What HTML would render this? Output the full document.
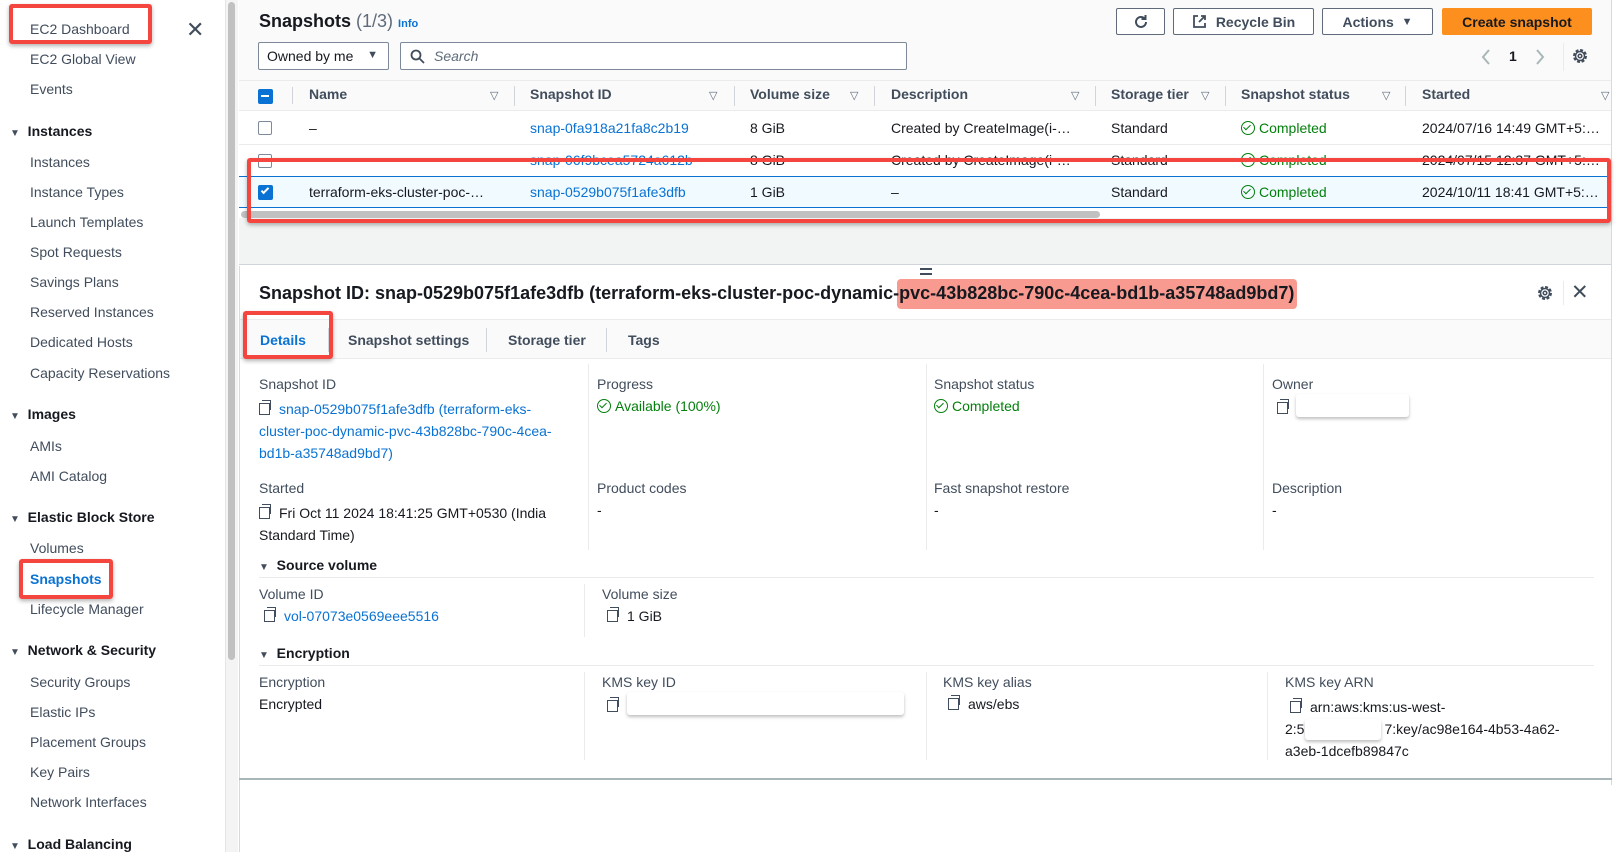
<!DOCTYPE html>
<html><head><meta charset="utf-8">
<style>
*{box-sizing:border-box;margin:0;padding:0}
body{width:1616px;height:852px;overflow:hidden;background:#fff;font-family:"Liberation Sans",sans-serif;font-size:14px;color:#16191f;position:relative}
.a{position:absolute;white-space:nowrap}
.nav{color:#414d5c;font-size:14px}
.hd{font-weight:bold;color:#16191f;font-size:14px}
.tri{font-size:10px;color:#414d5c}
.rb{position:absolute;border:4px solid #f4453e;border-radius:3px;box-shadow:0 2px 4px rgba(0,0,0,.3)}
.btn{position:absolute;border:1px solid #5f6b7a;border-radius:2px;background:#fff;font-weight:bold;color:#414d5c;font-size:14px;display:flex;align-items:center;justify-content:center}
.th{position:absolute;top:86px;font-weight:bold;color:#414d5c;font-size:14px}
.sep{position:absolute;width:1px;background:#d1d5db}
.fi{position:absolute;font-size:11px;color:#5f6b7a}
.lnk{color:#0972d3}
.grn{color:#037f0c}
.lab{color:#414d5c}
.cp{display:inline-block;width:11px;height:12px;border:1.5px solid #414d5c;position:relative;margin-right:9px;vertical-align:-1px}
.cp:after{content:"";position:absolute;left:2px;top:-4px;width:8px;height:9px;border-top:1.5px solid #414d5c;border-right:1.5px solid #414d5c}
.ck{display:inline-block;width:14px;height:14px;border:1.5px solid #037f0c;border-radius:50%;position:relative;vertical-align:-2px;margin-right:4px}
.ck:after{content:"";position:absolute;left:3px;top:1px;width:3px;height:6px;border-right:1.5px solid #037f0c;border-bottom:1.5px solid #037f0c;transform:rotate(45deg)}
.cb{position:absolute;width:14px;height:14px;border:1.5px solid #7d8998;border-radius:2px;background:#fff}
.wb{position:absolute;background:#fff;border-radius:3px;box-shadow:0 2px 3px rgba(0,0,0,.25)}
.vs{position:absolute;width:1px;background:#e9ebed}
</style></head><body>

<div class="a" style="left:0;top:0;width:225px;height:852px;background:#fff"></div>
<div class="a" style="left:225px;top:0;width:13px;height:852px;background:#f4f4f4;border-left:1px solid #e5e5e5"></div>
<div class="a" style="left:228px;top:2px;width:7px;height:658px;background:#c1c1c1;border-radius:4px"></div>

<div class="a nav" style="left:30px;top:21px">EC2 Dashboard</div>
<div class="rb" style="left:9px;top:4px;width:143px;height:40px"></div>
<div class="a" style="left:186px;top:17px;font-size:22px;color:#414d5c;font-weight:300">✕</div>
<div class="a nav" style="left:30px;top:51px">EC2 Global View</div>
<div class="a nav" style="left:30px;top:81px">Events</div>
<div class="a hd" style="left:10px;top:123px"><span class="tri">▼</span>&nbsp; Instances</div>
<div class="a nav" style="left:30px;top:154px">Instances</div>
<div class="a nav" style="left:30px;top:184px">Instance Types</div>
<div class="a nav" style="left:30px;top:214px">Launch Templates</div>
<div class="a nav" style="left:30px;top:244px">Spot Requests</div>
<div class="a nav" style="left:30px;top:274px">Savings Plans</div>
<div class="a nav" style="left:30px;top:304px">Reserved Instances</div>
<div class="a nav" style="left:30px;top:334px">Dedicated Hosts</div>
<div class="a nav" style="left:30px;top:365px">Capacity Reservations</div>
<div class="a hd" style="left:10px;top:406px"><span class="tri">▼</span>&nbsp; Images</div>
<div class="a nav" style="left:30px;top:438px">AMIs</div>
<div class="a nav" style="left:30px;top:468px">AMI Catalog</div>
<div class="a hd" style="left:10px;top:509px"><span class="tri">▼</span>&nbsp; Elastic Block Store</div>
<div class="a nav" style="left:30px;top:540px">Volumes</div>
<div class="a" style="left:30px;top:571px;font-weight:bold;color:#0972d3">Snapshots</div>
<div class="rb" style="left:19px;top:559px;width:94px;height:40px"></div>
<div class="a nav" style="left:30px;top:601px">Lifecycle Manager</div>
<div class="a hd" style="left:10px;top:642px"><span class="tri">▼</span>&nbsp; Network &amp; Security</div>
<div class="a nav" style="left:30px;top:674px">Security Groups</div>
<div class="a nav" style="left:30px;top:704px">Elastic IPs</div>
<div class="a nav" style="left:30px;top:734px">Placement Groups</div>
<div class="a nav" style="left:30px;top:764px">Key Pairs</div>
<div class="a nav" style="left:30px;top:794px">Network Interfaces</div>
<div class="a hd" style="left:10px;top:836px"><span class="tri">▼</span>&nbsp; Load Balancing</div>

<div class="a" style="left:239px;top:0;width:1373px;height:80px;background:#fafafa"></div>
<div class="a" style="left:1611px;top:0;width:1px;height:785px;background:#d5dbdb"></div>
<div class="a" style="left:259px;top:11px;font-size:18px;font-weight:bold">Snapshots <span style="font-weight:normal;color:#5f6b7a">(1/3)</span> <span style="font-size:11px;color:#0972d3">Info</span></div>

<div class="btn" style="left:1116px;top:8px;width:49px;height:27px"><svg width="18" height="18" viewBox="0 0 18 18"><path d="M14 9a5 5 0 1 1-1.5-3.6" fill="none" stroke="#414d5c" stroke-width="2"/><path d="M13.5 2v4h-4" fill="none" stroke="#414d5c" stroke-width="2"/></svg></div>
<div class="btn" style="left:1173px;top:8px;width:141px;height:27px"><svg width="15" height="15" viewBox="0 0 15 15" style="margin-right:9px"><path d="M6 2H2v11h11V9M9 2h4v4M13 2L7 8" fill="none" stroke="#414d5c" stroke-width="1.8"/></svg>Recycle Bin</div>
<div class="btn" style="left:1322px;top:8px;width:111px;height:27px">Actions&nbsp;&nbsp;<span style="font-size:11px">▼</span></div>
<div class="btn" style="left:1442px;top:8px;width:150px;height:27px;background:#fd8f1f;border-color:#fd8f1f;color:#16191f">Create snapshot</div>

<div class="a" style="left:258px;top:42px;width:131px;height:28px;border:1px solid #7d8998;border-radius:2px;background:#fff;padding:5px 8px;color:#16191f">Owned by me <span style="position:absolute;right:10px;top:6px;font-size:11px;color:#414d5c">▼</span></div>
<div class="a" style="left:400px;top:42px;width:507px;height:28px;border:1px solid #7d8998;border-radius:2px;background:#fff;padding:5px 0 0 33px;color:#5f6b7a;font-style:italic">Search
<svg style="position:absolute;left:9px;top:6px" width="15" height="15" viewBox="0 0 15 15"><circle cx="6" cy="6" r="4.5" fill="none" stroke="#414d5c" stroke-width="1.8"/><path d="M9.5 9.5L14 14" stroke="#414d5c" stroke-width="1.8"/></svg></div>
<svg class="a" style="left:1480px;top:48px" width="12" height="18" viewBox="0 0 12 18"><path d="M9 2L3 9l6 7" fill="none" stroke="#aab7b8" stroke-width="2"/></svg>
<div class="a" style="left:1509px;top:48px;font-weight:bold">1</div>
<svg class="a" style="left:1534px;top:48px" width="12" height="18" viewBox="0 0 12 18"><path d="M3 2l6 7-6 7" fill="none" stroke="#aab7b8" stroke-width="2"/></svg>
<div class="a" style="left:1563px;top:43px;width:1px;height:28px;background:#e9ebed"></div>
<svg class="a" style="left:1571px;top:47px" width="18" height="18" viewBox="0 0 18 18"><circle cx="9" cy="9" r="6" fill="none" stroke="#414d5c" stroke-width="2" stroke-dasharray="3 1.7"/><circle cx="9" cy="9" r="4.5" fill="none" stroke="#414d5c" stroke-width="1.5"/><circle cx="9" cy="9" r="1.8" fill="none" stroke="#414d5c" stroke-width="1.5"/></svg>

<div class="a" style="left:239px;top:80px;width:1372px;height:31px;background:#fafafa;border-top:1px solid #e9ebed;border-bottom:1px solid #e9ebed"></div>
<div class="a" style="left:258px;top:89px;width:15px;height:15px;background:#0972d3;border-radius:2px"><div style="position:absolute;left:3px;top:6px;width:8px;height:2px;background:#fff"></div></div>
<div class="sep" style="left:292px;top:87px;height:17px"></div>
<div class="th" style="left:309px">Name</div><div class="fi" style="left:490px;top:89px">▽</div>
<div class="sep" style="left:514px;top:86px;height:20px"></div>
<div class="th" style="left:530px">Snapshot ID</div><div class="fi" style="left:709px;top:89px">▽</div>
<div class="sep" style="left:734px;top:86px;height:20px"></div>
<div class="th" style="left:750px">Volume size</div><div class="fi" style="left:850px;top:89px">▽</div>
<div class="sep" style="left:874px;top:86px;height:20px"></div>
<div class="th" style="left:891px">Description</div><div class="fi" style="left:1071px;top:89px">▽</div>
<div class="sep" style="left:1095px;top:86px;height:20px"></div>
<div class="th" style="left:1111px">Storage tier</div><div class="fi" style="left:1201px;top:89px">▽</div>
<div class="sep" style="left:1225px;top:86px;height:20px"></div>
<div class="th" style="left:1241px">Snapshot status</div><div class="fi" style="left:1382px;top:89px">▽</div>
<div class="sep" style="left:1405px;top:86px;height:20px"></div>
<div class="th" style="left:1422px">Started</div><div class="fi" style="left:1601px;top:89px">▽</div>

<div class="a" style="left:239px;top:144px;width:1372px;height:1px;background:#e9ebed"></div>
<div class="cb" style="left:258px;top:121px"></div>
<div class="a" style="left:309px;top:120px">–</div>
<div class="a lnk" style="left:530px;top:120px">snap-0fa918a21fa8c2b19</div>
<div class="a" style="left:750px;top:120px">8 GiB</div>
<div class="a" style="left:891px;top:120px">Created by CreateImage(i-…</div>
<div class="a" style="left:1111px;top:120px">Standard</div>
<div class="a grn" style="left:1241px;top:120px"><span class="ck"></span>Completed</div>
<div class="a" style="left:1422px;top:120px">2024/07/16 14:49 GMT+5:…</div>

<div class="a" style="left:239px;top:145px;width:1372px;height:30px;overflow:hidden">
<div class="cb" style="left:19px;top:9px"></div>
<div class="a lnk" style="left:291px;top:7px">snap-06f9bcea5724a612b</div>
<div class="a" style="left:511px;top:7px">8 GiB</div>
<div class="a" style="left:652px;top:7px">Created by CreateImage(i-…</div>
<div class="a" style="left:872px;top:7px">Standard</div>
<div class="a grn" style="left:1002px;top:7px"><span class="ck"></span>Completed</div>
<div class="a" style="left:1183px;top:7px">2024/07/15 12:37 GMT+5:…</div>
</div>

<div class="a" style="left:239px;top:176px;width:1372px;height:32px;background:#f1faff;border-top:1px solid #0972d3;border-bottom:1px solid #0972d3"></div>
<div class="a" style="left:258px;top:185px;width:15px;height:15px;background:#0972d3;border-radius:2px"><div style="position:absolute;left:5px;top:1px;width:4px;height:8px;border-right:2px solid #fff;border-bottom:2px solid #fff;transform:rotate(45deg)"></div></div>
<div class="a" style="left:309px;top:184px">terraform-eks-cluster-poc-…</div>
<div class="a lnk" style="left:530px;top:184px">snap-0529b075f1afe3dfb</div>
<div class="a" style="left:750px;top:184px">1 GiB</div>
<div class="a" style="left:891px;top:184px">–</div>
<div class="a" style="left:1111px;top:184px">Standard</div>
<div class="a grn" style="left:1241px;top:184px"><span class="ck"></span>Completed</div>
<div class="a" style="left:1422px;top:184px">2024/10/11 18:41 GMT+5:…</div>

<div class="a" style="left:239px;top:208px;width:1372px;height:10px;background:#fff"></div>
<div class="a" style="left:241px;top:211px;width:859px;height:7px;background:#c1c1c1;border-radius:4px"></div>
<div class="a" style="left:239px;top:218px;width:1372px;height:47px;background:#f2f3f3;border-bottom:1px solid #d1d5db"></div>
<div class="rb" style="left:247px;top:158px;width:1364px;height:65px"></div>

<div class="a" style="left:920px;top:268px;width:12px;height:2px;background:#414d5c"></div>
<div class="a" style="left:920px;top:273px;width:12px;height:2px;background:#414d5c"></div>
<div class="a" style="left:897px;top:279px;width:400px;height:30px;background:#f89a8f;border-radius:4px"></div>
<div class="a" style="left:259px;top:283px;font-size:18px;font-weight:bold">Snapshot ID: snap-0529b075f1afe3dfb (terraform-eks-cluster-poc-dynamic-pvc-43b828bc-790c-4cea-bd1b-a35748ad9bd7)</div>
<svg class="a" style="left:1536px;top:284px" width="18" height="18" viewBox="0 0 18 18"><circle cx="9" cy="9" r="6" fill="none" stroke="#414d5c" stroke-width="2" stroke-dasharray="3 1.7"/><circle cx="9" cy="9" r="4.5" fill="none" stroke="#414d5c" stroke-width="1.5"/><circle cx="9" cy="9" r="1.8" fill="none" stroke="#414d5c" stroke-width="1.5"/></svg>
<div class="a" style="left:1563px;top:281px;width:1px;height:24px;background:#e9ebed"></div>
<div class="a" style="left:1571px;top:280px;font-size:21px;color:#414d5c">✕</div>

<div class="a" style="left:239px;top:319px;width:1372px;height:40px;background:#fafafa;border-top:1px solid #e9ebed;border-bottom:1px solid #e9ebed"></div>
<div class="a" style="left:260px;top:332px;font-weight:bold;color:#0972d3">Details</div>
<div class="a" style="left:328px;top:328px;width:1px;height:24px;background:#d1d5db"></div>
<div class="a" style="left:348px;top:332px;font-weight:bold;color:#414d5c">Snapshot settings</div>
<div class="a" style="left:486px;top:328px;width:1px;height:24px;background:#d1d5db"></div>
<div class="a" style="left:508px;top:332px;font-weight:bold;color:#414d5c">Storage tier</div>
<div class="a" style="left:606px;top:328px;width:1px;height:24px;background:#d1d5db"></div>
<div class="a" style="left:628px;top:332px;font-weight:bold;color:#414d5c">Tags</div>
<div class="rb" style="left:243px;top:311px;width:90px;height:48px"></div>

<div class="vs" style="left:588px;top:364px;height:186px"></div>
<div class="vs" style="left:926px;top:364px;height:186px"></div>
<div class="vs" style="left:1263px;top:364px;height:186px"></div>

<div class="a lab" style="left:259px;top:376px">Snapshot ID</div>
<div class="a lnk" style="left:259px;top:398px;line-height:22px;white-space:normal;width:305px"><span class="cp"></span>snap-0529b075f1afe3dfb (terraform-eks-cluster-poc-dynamic-pvc-43b828bc-790c-4cea-bd1b-a35748ad9bd7)</div>
<div class="a lab" style="left:597px;top:376px">Progress</div>
<div class="a grn" style="left:597px;top:398px"><span class="ck"></span>Available (100%)</div>
<div class="a lab" style="left:934px;top:376px">Snapshot status</div>
<div class="a grn" style="left:934px;top:398px"><span class="ck"></span>Completed</div>
<div class="a lab" style="left:1272px;top:376px">Owner</div>
<div class="a" style="left:1277px;top:400px"><span class="cp"></span></div>
<div class="wb" style="left:1296px;top:394px;width:113px;height:23px"></div>

<div class="a lab" style="left:259px;top:480px">Started</div>
<div class="a" style="left:259px;top:502px;line-height:22px;white-space:normal;width:320px"><span class="cp"></span>Fri Oct 11 2024 18:41:25 GMT+0530 (India Standard Time)</div>
<div class="a lab" style="left:597px;top:480px">Product codes</div>
<div class="a" style="left:597px;top:502px">-</div>
<div class="a lab" style="left:934px;top:480px">Fast snapshot restore</div>
<div class="a" style="left:934px;top:502px">-</div>
<div class="a lab" style="left:1272px;top:480px">Description</div>
<div class="a" style="left:1272px;top:502px">-</div>

<div class="a hd" style="left:259px;top:557px"><span class="tri">▼</span>&nbsp; Source volume</div>
<div class="a" style="left:259px;top:577px;width:1335px;height:1px;background:#e9ebed"></div>
<div class="vs" style="left:584px;top:584px;height:53px"></div>
<div class="a lab" style="left:259px;top:586px">Volume ID</div>
<div class="a lnk" style="left:264px;top:608px"><span class="cp"></span>vol-07073e0569eee5516</div>
<div class="a lab" style="left:602px;top:586px">Volume size</div>
<div class="a" style="left:607px;top:608px"><span class="cp"></span>1 GiB</div>

<div class="a hd" style="left:259px;top:645px"><span class="tri">▼</span>&nbsp; Encryption</div>
<div class="a" style="left:259px;top:665px;width:1335px;height:1px;background:#e9ebed"></div>
<div class="vs" style="left:584px;top:672px;height:88px"></div>
<div class="vs" style="left:926px;top:672px;height:88px"></div>
<div class="vs" style="left:1267px;top:672px;height:88px"></div>
<div class="a lab" style="left:259px;top:674px">Encryption</div>
<div class="a" style="left:259px;top:696px">Encrypted</div>
<div class="a lab" style="left:602px;top:674px">KMS key ID</div>
<div class="a" style="left:607px;top:698px"><span class="cp"></span></div>
<div class="wb" style="left:627px;top:692px;width:277px;height:23px"></div>
<div class="a lab" style="left:943px;top:674px">KMS key alias</div>
<div class="a" style="left:948px;top:696px"><span class="cp"></span>aws/ebs</div>
<div class="a lab" style="left:1285px;top:674px">KMS key ARN</div>
<div class="a" style="left:1285px;top:696px;line-height:22px;white-space:normal;width:300px"><span class="cp" style="margin-left:5px"></span>arn:aws:kms:us-west-<br>2:5<span style="display:inline-block;width:80px"></span>7:key/ac98e164-4b53-4a62-<br>a3eb-1dcefb89847c</div>
<div class="wb" style="left:1305px;top:719px;width:76px;height:21px"></div>

<div class="a" style="left:239px;top:266px;width:1px;height:586px;background:#d5dbdb"></div>
<div class="a" style="left:239px;top:778px;width:1373px;height:2px;background:#aab7b8"></div>
</body></html>
